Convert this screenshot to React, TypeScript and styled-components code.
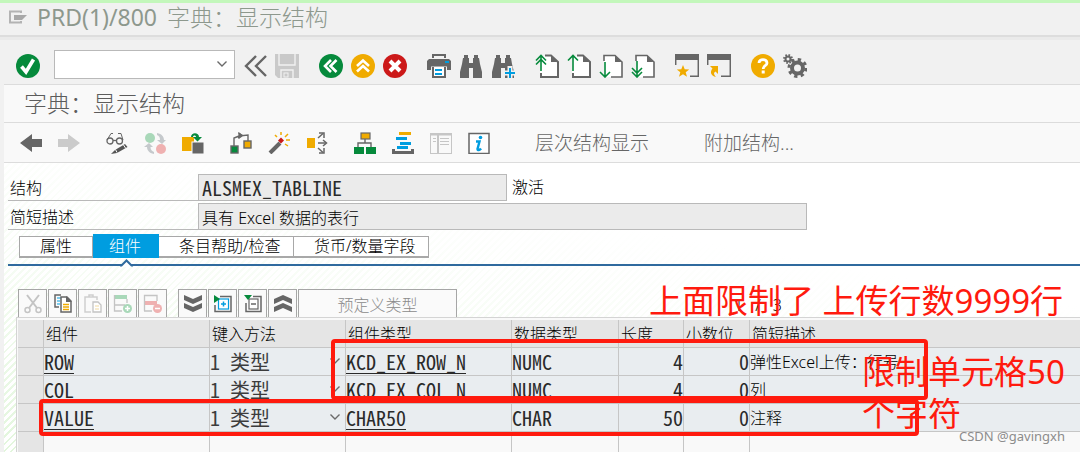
import React from "react";
import styled, { createGlobalStyle } from "styled-components";

const GREY = "#666666";
const GREEN = "#068a3c";
const AMBER = "#f0ab00";
const BLUE = "#009de0";
const RED = "#ff1a0e";

const sans = `"Noto Sans", "Noto Sans CJK SC", sans-serif`;
const mono = `"Noto Sans Mono CJK SC", "Liberation Mono", "Noto Sans CJK SC", monospace`;

const GlobalStyle = createGlobalStyle`
  * { box-sizing: border-box; }
  body { margin: 0; background: #f1f1f1; font-family: ${sans}; font-size: 16px; font-weight: 300; color: #000; overflow-x: hidden; }
  button, input, select { font: inherit; color: inherit; margin: 0; border-radius: 0; }
  svg { display: block; }
`;

const Page = styled.main`
  position: relative;
  width: 100%;
`;

const TitleBar = styled.header`
  display: flex;
  align-items: center;
  gap: 10px;
  height: 37px;
  padding: 0 8px 5px;
  border-top: 3px solid #c3f7bb;
  border-bottom: 2px solid #dddddd;
  color: #8d988d;
  font-size: 23px;
  font-weight: 400;
  line-height: 26px;
`;

const TitleCjk = styled.span`
  font-weight: 300;
`;

const Window = styled.div`
  border-top: 3px solid #eaeaea;
  padding-left: 4px;
`;

const SystemBar = styled.div`
  display: flex;
  align-items: center;
  gap: 20px;
  height: 45px;
  padding: 8px 12px 0;
  border-bottom: 1px solid #dcdcdc;
`;

const CommandArea = styled.div`
  display: flex;
  align-items: center;
  gap: 8px;
`;

const CommandSelect = styled.div`
  position: relative;
  margin: 0 0 4px 6px;
  select {
    display: block;
    appearance: none;
    width: 181px;
    height: 29px;
    background: #fff;
    border: 1px solid #b9b9b9;
  }
  svg {
    position: absolute;
    right: 7px;
    top: 10px;
    pointer-events: none;
  }
`;

const Group = styled.div<{ $gap: number }>`
  display: flex;
  align-items: center;
  gap: ${(p) => p.$gap}px;
`;

const IconButton = styled.button`
  display: block;
  padding: 0;
  border: 0;
  background: none;
`;

const ScreenTitle = styled.h1`
  margin: 0;
  height: 38px;
  padding: 0 20px;
  background: #f9f9f9;
  border-bottom: 1px solid #dcdcdc;
  color: #5c5c5c;
  font-size: 23px;
  font-weight: 300;
  line-height: 36px;
`;

const AppBar = styled.div`
  display: flex;
  align-items: center;
  gap: 26px;
  height: 40px;
  padding: 0 16px;
  background: #f9f9f9;
  border-bottom: 1px solid #dcdcdc;
`;

const TextButton = styled.button`
  margin-left: 19px;
  padding: 0 10px 0 0;
  border: 0;
  background: none;
  color: #666;
  font-size: 19px;
  line-height: 24px;
`;

const Content = styled.section`
  padding: 11px 0 0 4px;
  background:
    linear-gradient(190deg, #fff 30%, rgba(255, 255, 255, 0.7) 60%, rgba(255, 255, 255, 0) 100%),
    repeating-linear-gradient(135deg, #ffffff 0 3px, #e2f6dc 3px 5px);
`;

const Field = styled.div`
  display: flex;
  height: 27px;
  margin-bottom: 2px;
  label {
    width: 190px;
    padding: 2px;
    border-bottom: 1px solid #b9b9b9;
    line-height: 24px;
  }
  span {
    padding-left: 5px;
    line-height: 27px;
  }
`;

const ReadOnlyInput = styled.input<{ $width: number; $mono?: boolean }>`
  width: ${(p) => p.$width}px;
  padding: 0 3px;
  background: #ebebeb;
  border: 1px solid #b9b9b9;
  ${(p) => p.$mono && `font-family: ${mono}; font-size: 20px; line-height: 25px; color: #2a2a2a;`}
`;

const TabStrip = styled.nav`
  display: flex;
  height: 34px;
  padding: 2px 0 0 11px;
  border-bottom: 2px solid #2f6a9e;
`;

const Tab = styled.button<{ $active?: boolean; $width: number }>`
  position: relative;
  width: ${(p) => p.$width}px;
  height: ${(p) => (p.$active ? 24 : 22)}px;
  margin-top: ${(p) => (p.$active ? 0 : 2)}px;
  padding: 0 8px 0 ${(p) => (p.$active ? 16 : 20)}px;
  border: ${(p) => (p.$active ? 0 : "1px solid #a8a8a8")};
  border-bottom-width: ${(p) => (p.$active ? 0 : 2)}px;
  background: ${(p) => (p.$active ? BLUE : "#fff")};
  color: ${(p) => (p.$active ? "#fff" : "#000")};
  line-height: 19px;
  text-align: left;
  white-space: nowrap;
  & + & { border-left-width: 0; }
  svg {
    position: absolute;
    left: 27px;
    top: 25px;
  }
`;

const GridArea = styled.div`
  position: relative;
  padding: 23px 0 0 8px;
`;

const GridBar = styled.div`
  display: flex;
  gap: 1px;
  height: 28px;
  padding-left: 2px;
`;

const GridButton = styled.button<{ $wide?: boolean; $spaced?: boolean }>`
  display: flex;
  align-items: center;
  justify-content: center;
  width: ${(p) => (p.$wide ? 159 : 29)}px;
  height: 28px;
  margin-left: ${(p) => (p.$spaced ? 10 : 0)}px;
  padding: 0;
  border: 1px solid #a6a6a6;
  border-bottom: 0;
  background: #fafafa;
  color: #8a8a8a;
`;

const Counter = styled.span`
  display: flex;
  gap: 12px;
  margin-left: 276px;
  font-size: 16px;
  line-height: 32px;
`;

const Table = styled.table`
  width: 100%;
  table-layout: fixed;
  border-collapse: separate;
  border-spacing: 0;
  border-top: 1px solid #d4d4d4;
  border-left: 1px solid #d4d4d4;
  padding: 2px 0 0 1px;
  background: #f9f9f9;
  line-height: 24px;
  th, td {
    height: 28px;
    padding: 0;
    border-right: 1px solid #c6c6c6;
    border-bottom: 1px solid #c6c6c6;
    white-space: nowrap;
    overflow: hidden;
  }
  th:last-child, td:last-child { border-right: 0; }
  th {
    padding-left: 2px;
    background: #e5e5e5;
    font-weight: 300;
    text-align: left;
  }
  td { background: #e9edf0; }
  td:first-child { background: #e5e5e5; }
`;

const Code = styled.td<{ $right?: boolean }>`
  color: #2a2a2a;
  font-family: ${mono};
  font-size: 20px;
  line-height: 24px;
  text-align: ${(p) => (p.$right ? "right" : "left")};
  a {
    color: inherit;
    text-underline-offset: 3px;
    text-decoration-thickness: 1px;
    text-decoration-skip-ink: none;
  }
`;

const TypeCell = styled.td`
  position: relative;
  select {
    display: block;
    appearance: none;
    width: 100%;
    padding: 0;
    border: 0;
    background: none;
    font-family: ${mono};
    font-size: 20px;
    line-height: 24px;
    color: #3c3c3c;
  }
  svg {
    position: absolute;
    right: 4px;
    top: 9px;
    pointer-events: none;
  }
`;

const LastRow = styled.tr`
  && td { height: 20px; border-bottom: 0; }
  && td:not(:first-child) { background: #f9f9f9; }
`;

/* Red mark-up laid over the grid */
const Mark = styled.div<{ $x: number; $y: number; $w: number; $h: number }>`
  position: absolute;
  left: ${(p) => p.$x}px;
  top: ${(p) => p.$y}px;
  width: ${(p) => p.$w}px;
  height: ${(p) => p.$h}px;
  border: 4px solid ${RED};
  border-radius: 4px;
  pointer-events: none;
`;

const Note = styled.p<{ $x: number; $y: number }>`
  position: absolute;
  left: ${(p) => p.$x}px;
  top: ${(p) => p.$y}px;
  margin: 0;
  color: ${RED};
  font-size: 33px;
  font-weight: 400;
  line-height: 42px;
  white-space: nowrap;
  pointer-events: none;
`;

const Watermark = styled.span`
  position: absolute;
  right: 15px;
  bottom: 6px;
  color: #8c8c8c;
  font-size: 13px;
  font-weight: 400;
  line-height: 20px;
`;

type Art = React.ReactNode;

const Icon = ({ size, children }: { size: number; children: Art }) => (
  <svg width={size} height={size} viewBox={`0 0 ${size} ${size}`} fill="none" aria-hidden="true">
    {children}
  </svg>
);

const Chevron = () => (
  <svg width="12" height="8" viewBox="0 0 12 8" fill="none" aria-hidden="true">
    <path d="M1.5 1.5L6 6L10.500 1.500" stroke="#6a6a6a" strokeWidth="1.400" />
  </svg>
);

const pageShape = (
  <>
    <path d="M5 2H17L23 8V23H5Z" fill="#fff" />
    <path d="M16 1.500L22.500 8H16Z" fill={GREY} />
  </>
);

const binoculars = (
  <path
    d="M5 1H9V4H10V9H14V4H15V1H19V4H20L21 10L23 18V24H14V14H10V24H1V18L3 10L4 4H5Z"
    fill={GREY}
  />
);

const systemIcons: Record<string, Art> = {
  确认: (
    <>
      <circle cx="12" cy="12" r="12" fill={GREEN} />
      <path d="M5.500 12.500L10 18L17.500 5.500" stroke="#fff" strokeWidth="3.600" />
    </>
  ),
  折叠: <path d="M13 2L3 12L13 22M23 2L13 12L23 22" stroke={GREY} strokeWidth="2.400" />,
  保存: (
    <>
      <path d="M0 0H24V24H3L0 21Z" fill="#c9c9c9" />
      <path d="M4 0V11H20V0M6 24V16H18V24" stroke="#f1f1f1" strokeWidth="1.400" />
      <rect x="9" y="19" width="4" height="4" stroke="#f1f1f1" />
    </>
  ),
  返回: (
    <>
      <circle cx="12" cy="12" r="12" fill={GREEN} />
      <path d="M12 6L6 12L12 18M17.500 6L11.500 12L17.500 18" stroke="#fff" strokeWidth="2.600" />
    </>
  ),
  退出: (
    <>
      <circle cx="12" cy="12" r="12" fill={AMBER} />
      <path d="M6 12L12 6.500L18 12M6 17.500L12 12L18 17.500" stroke="#fff" strokeWidth="2.600" />
    </>
  ),
  取消: (
    <>
      <circle cx="12" cy="12" r="12" fill="#cc1919" />
      <path d="M7 7L17 17M17 7L7 17" stroke="#fff" strokeWidth="4" />
    </>
  ),
  打印: (
    <>
      <path d="M6 4V1H18V4" stroke={GREY} strokeWidth="2" />
      <path d="M2 5H22L24 7V16H0V7Z" fill={GREY} />
      <path d="M18 8H22" stroke={BLUE} strokeWidth="2" />
      <path d="M4 12.500H20V17H19V24H5V17H4Z" fill="#f1f1f1" />
      <path d="M6 13V23H18V13" stroke={GREY} strokeWidth="2" fill="#fff" />
      <path d="M8 16H15M8 20H15" stroke={BLUE} strokeWidth="2" />
    </>
  ),
  查找: binoculars,
  继续查找: (
    <>
      {binoculars}
      <path d="M19 12V24M12 19H24" stroke="#f1f1f1" strokeWidth="5" />
      <path d="M19 14V24M14 19H24" stroke={BLUE} strokeWidth="2" />
    </>
  ),
  首页: (
    <>
      {pageShape}
      <path d="M10 1.500H16L23 8V23H6V19" stroke={GREY} strokeWidth="2" />
      <path d="M6 17V2M1 6.500L6 1.500L11 6.500M1 10.500L6 5.500L11 10.500" stroke={GREEN} strokeWidth="1.600" />
    </>
  ),
  上页: (
    <>
      {pageShape}
      <path d="M10 1.500H16L23 8V23H6V19" stroke={GREY} strokeWidth="2" />
      <path d="M6 17V2M1 6.500L6 1.500L11 6.500" stroke={GREEN} strokeWidth="1.600" />
    </>
  ),
  下页: (
    <>
      {pageShape}
      <path d="M5 7V1.500H16L23 8V23H12" stroke={GREY} strokeWidth="1.600" />
      <path d="M6 8V23M1 18L6 23L11 18" stroke={GREEN} strokeWidth="1.600" />
    </>
  ),
  末页: (
    <>
      {pageShape}
      <path d="M5 7V1.500H16L23 8V23H12" stroke={GREY} strokeWidth="1.600" />
      <path d="M6 7V23M1 18L6 23L11 18M1 14L6 19L11 14" stroke={GREEN} strokeWidth="1.600" />
    </>
  ),
  新窗口: (
    <>
      <path d="M0 0H24V6H0Z" fill={GREY} />
      <path d="M.7 5V11M23.300 5V22.300H15" stroke={GREY} strokeWidth="1.500" />
      <path d="M8 11L9.700 15.300L14.200 15.500L10.700 18.300L12 22.800L8 20.200L4 22.800L5.300 18.300L1.800 15.500L6.300 15.300Z" fill={AMBER} />
    </>
  ),
  快捷方式: (
    <>
      <path d="M0 0H24V6H0Z" fill={GREY} />
      <path d="M.7 5V11M23.300 5V22.300H14" stroke={GREY} strokeWidth="1.500" />
      <path d="M3 12H11V20L8.500 17.500C6.500 19 6.500 20 9 23C4 22 2.500 18 5.500 14.500Z" fill={AMBER} />
    </>
  ),
  帮助: (
    <>
      <circle cx="12" cy="12" r="12" fill={AMBER} />
      <path d="M8 9C8 4.500 16 4.500 16 9C16 12 12.200 11.500 12.200 15" stroke="#fff" strokeWidth="2.800" />
      <rect x="10.700" y="16.500" width="3" height="3" fill="#fff" />
    </>
  ),
  设置: (
    <>
      <circle cx="14.500" cy="14" r="5.500" stroke={GREY} strokeWidth="4" />
      <circle cx="14.500" cy="14" r="8.500" stroke={GREY} strokeWidth="3" strokeDasharray="3.300 3.376" />
      <circle cx="5" cy="5" r="2.500" stroke={GREY} strokeWidth="2" />
      <circle cx="5" cy="5" r="4" stroke={GREY} strokeWidth="2" strokeDasharray="1.600 1.542" />
    </>
  ),
};

const appIcons: Record<string, Art> = {
  后退: <path d="M0 11L12 2V7H22V15H12V20Z" fill={GREY} />,
  前进: <path d="M22 11L10 2V7H0V15H10V20Z" fill="#cbcbcb" />,
  "显示/修改": (
    <>
      <path d="M1 8L5 1.500H7M12 1.500H15L17 8" stroke={GREY} />
      <circle cx="4" cy="9" r="3" stroke={GREY} strokeWidth="1.300" />
      <circle cx="13.500" cy="9" r="3" stroke={GREY} strokeWidth="1.300" />
      <path d="M7 8.500H10.500" stroke={GREY} strokeWidth="1.300" />
      <path d="M9 18L19 12L21.500 15L11 21L5 22Z" fill="#555" />
      <path d="M9.500 17.500L11 20.500M17.500 13L19.500 16" stroke="#f9f9f9" />
    </>
  ),
  激活状态: (
    <>
      <circle cx="6" cy="6" r="5" fill="#a9d8b9" />
      <circle cx="17" cy="17" r="5" fill="#efb1b1" />
      <path d="M13 1C18 2 20 5 20 8H22L18 12L13 8H16C16 5 15 4 13 3Z" fill="#c5c9cc" />
      <path d="M10 22C5 21 3 18 3 15H0L5 11L9 15H6.500C6.500 18 8 19 10 20Z" fill="#c5c9cc" />
    </>
  ),
  复制对象: (
    <>
      <rect x="0" y="5" width="12" height="14" fill={AMBER} />
      <rect x="10" y="10" width="12" height="12" fill={GREY} stroke="#f9f9f9" />
      <path d="M9 5C9 0 17 0 17 5H20L15.500 9.500L11 5H14C14 3 11 3 11 5Z" fill={GREEN} />
    </>
  ),
  使用位置: (
    <>
      <path d="M4 14V6L9 4L18 3V9M9 1L12 4L8 6" stroke={GREY} strokeWidth="1.400" />
      <path d="M8 0L13 3L9 7Z" fill={GREY} />
      <rect x="1" y="14" width="7" height="7" fill={GREEN} stroke={GREY} strokeWidth="1.400" />
      <rect x="14" y="9" width="7" height="7" fill={AMBER} stroke={GREY} strokeWidth="1.400" />
    </>
  ),
  检查: (
    <>
      <path d="M2 21L12 11" stroke={GREY} strokeWidth="4" />
      <path d="M13 5.500L16 8.500L13 11.500L10 8.500Z" fill="#cc1919" />
      <path d="M9 5L7 3M13 3V0M17 5L20 2M18 8H22M17 12L20 14" stroke={AMBER} strokeWidth="1.500" />
    </>
  ),
  分发: (
    <>
      <rect x="1" y="6" width="8" height="10" fill={AMBER} />
      <path d="M12 6L17 1.500M12 11H20M12 16L17 20.500" stroke={GREY} strokeWidth="1.500" />
      <path d="M13 1H18V6M17 8L20.500 11L17 14M13 21H18V16" stroke={GREY} strokeWidth="1.500" />
    </>
  ),
  层次: (
    <>
      <path d="M11 7V11M4 15V11H17V15" stroke={GREY} strokeWidth="1.400" />
      <rect x="7" y="1" width="9" height="6" fill={AMBER} stroke={GREY} strokeWidth="1.200" />
      <rect x="0" y="15" width="10" height="7" fill={GREEN} />
      <rect x="12" y="15" width="10" height="7" fill={GREEN} />
    </>
  ),
  对齐: (
    <>
      <path d="M7 1.500H19" stroke={AMBER} strokeWidth="3" />
      <path d="M4 6.500H15M8 11.500H19M5 15.500H16" stroke={BLUE} strokeWidth="3" />
      <path d="M0 17H3V19H19V17H22V22H0Z" fill={GREY} />
    </>
  ),
  表视图: (
    <>
      <rect x=".5" y="1.500" width="21" height="20" stroke="#c6c6c6" />
      <path d="M0 2.500H22M8 3V21" stroke="#c6c6c6" strokeWidth="2" />
      <path d="M3 6.500H6M3 9.500H6M10 6.500H19M10 9.500H19M10 12.500H19" stroke="#c6c6c6" />
    </>
  ),
  信息: (
    <>
      <rect x="1" y="1.500" width="20" height="20" fill="#fff" stroke={GREY} strokeWidth="1.500" />
      <circle cx="12.500" cy="5.500" r="1.800" fill={BLUE} />
      <path d="M8 9.500H11.500L9.500 17C9.500 18.800 12 18 13 16.500" stroke={BLUE} strokeWidth="2.400" />
    </>
  ),
};

const gridIcons: Record<string, Art> = {
  剪切: (
    <>
      <path d="M4 1L14 14M16 1L6 14" stroke="#c4c4c4" strokeWidth="2" />
      <circle cx="4.500" cy="16" r="2.500" stroke="#c4c4c4" strokeWidth="1.500" />
      <circle cx="15.500" cy="16" r="2.500" stroke="#c4c4c4" strokeWidth="1.500" />
    </>
  ),
  复制: (
    <>
      <path d="M6 13H2V1H8" stroke={GREY} strokeWidth="1.500" />
      <path d="M4 4H8M4 7H7M4 10H7" stroke={BLUE} />
      <path d="M8 3H14L18 7V18H8Z" fill="#fff" stroke={GREY} strokeWidth="1.500" />
      <path d="M13 2L19 8H13Z" fill={GREY} />
      <path d="M10 10.500H16M10 13H16M10 15.500H16" stroke={AMBER} strokeWidth="1.500" />
    </>
  ),
  粘贴: (
    <>
      <path d="M8 18H2V3H14V6M6 3V1H10V3" stroke="#cfcfcf" strokeWidth="1.500" />
      <path d="M10 8H15L18 11V18H10Z" fill="#fff" stroke="#c4c4c4" strokeWidth="1.300" />
      <path d="M12 12H16M12 15H16" stroke="#f0d9a0" />
    </>
  ),
  插入行: (
    <>
      <rect x="1" y="1" width="13" height="4" fill="#a9d8b9" />
      <path d="M1.500 1V17H9M1 11H12M14 5V9" stroke="#c4c4c4" strokeWidth="1.300" />
      <circle cx="14.500" cy="14.500" r="4.500" fill="#a9d8b9" />
      <path d="M12 14.500H17M14.500 12V17" stroke="#fff" strokeWidth="1.500" />
    </>
  ),
  删除行: (
    <>
      <rect x="1" y="7" width="13" height="4" fill="#efb1b1" />
      <path d="M1.500 17V1.500H14V7M1 17H9" stroke="#c4c4c4" strokeWidth="1.300" />
      <circle cx="14.500" cy="14.500" r="4.500" fill="#efb1b1" />
      <path d="M12 14.500H17" stroke="#fff" strokeWidth="1.500" />
    </>
  ),
  展开全部: <path d="M1 1L10 5L19 1V6L10 10L1 6ZM1 9L10 13L19 9V14L10 18L1 14Z" fill={GREY} />,
  展开: (
    <>
      <path d="M7 2.500H18V17.500H2V11" stroke={GREY} strokeWidth="1.500" />
      <rect x="5.500" y="5" width="10" height="10" stroke={BLUE} strokeWidth="1.200" fill="#fff" />
      <path d="M8 10H13M10.500 7.500V12.500" stroke={BLUE} strokeWidth="1.500" />
      <path d="M1 1L7 5L1 9Z" fill={GREEN} />
    </>
  ),
  收起: (
    <>
      <path d="M10 2.500H18V17.500H3V9" stroke={GREY} strokeWidth="1.500" />
      <rect x="6" y="5" width="9" height="10" stroke={GREY} strokeWidth="1.200" fill="#fff" />
      <path d="M8 10H13" stroke={GREY} strokeWidth="1.500" />
      <path d="M1 1H9L5 6Z" fill={GREEN} />
    </>
  ),
  收起全部: <path d="M1 10L10 6L19 10V5L10 1L1 5ZM1 18L10 14L19 18V13L10 9L1 13Z" fill={GREY} />,
};

const systemGroups = [
  ["返回", "退出", "取消"],
  ["打印", "查找", "继续查找"],
  ["首页", "上页", "下页", "末页"],
  ["新窗口", "快捷方式"],
  ["帮助", "设置"],
];

const appGroups = [
  ["后退", "前进"],
  ["显示/修改", "激活状态", "复制对象"],
  ["使用位置", "检查", "分发"],
  ["层次", "对齐", "表视图", "信息"],
];

const columns = [26, 166, 136, 166, 107, 65, 66];
const headings = ["组件", "键入方法", "组件类型", "数据类型", "长度", "小数位", "简短描述"];

const rows = [
  { name: "ROW", type: "KCD_EX_ROW_N", data: "NUMC", length: 4, text: "弹性Excel上传：行号" },
  { name: "COL", type: "KCD_EX_COL_N", data: "NUMC", length: 4, text: "列" },
  { name: "VALUE", type: "CHAR50", data: "CHAR", length: 50, text: "注释" },
];

const SystemIcon = ({ name }: { name: string }) => (
  <IconButton type="button" aria-label={name}>
    <Icon size={24}>{systemIcons[name]}</Icon>
  </IconButton>
);

export default function App() {
  return (
    <>
      <GlobalStyle />
      <Page lang="zh-CN">
        <TitleBar>
          <svg width="19" height="14" viewBox="0 0 19 14" fill="none" aria-hidden="true">
            <path d="M13 3V1.500H2V12.500H13V11" stroke="#b3b3b3" strokeWidth="2" />
            <path d="M6 5H19L14 10H6Z" fill="#a8a8a8" />
          </svg>
          <span>PRD(1)/800</span>
          <TitleCjk>字典：显示结构</TitleCjk>
        </TitleBar>

        <Window>
          <SystemBar>
            <CommandArea>
              <SystemIcon name="确认" />
              <CommandSelect>
                <select aria-label="命令" defaultValue="">
                  <option value="" />
                </select>
                <Chevron />
              </CommandSelect>
              <Group $gap={8}>
                <SystemIcon name="折叠" />
                <SystemIcon name="保存" />
              </Group>
            </CommandArea>
            {systemGroups.map((names) => (
              <Group $gap={8} key={names[0]}>
                {names.map((name) => (
                  <SystemIcon name={name} key={name} />
                ))}
              </Group>
            ))}
          </SystemBar>

          <ScreenTitle>字典：显示结构</ScreenTitle>

          <AppBar>
            {appGroups.map((names) => (
              <Group $gap={16} key={names[0]}>
                {names.map((name) => (
                  <IconButton type="button" aria-label={name} key={name}>
                    <Icon size={22}>{appIcons[name]}</Icon>
                  </IconButton>
                ))}
              </Group>
            ))}
            <TextButton type="button">层次结构显示</TextButton>
            <TextButton type="button">附加结构...</TextButton>
          </AppBar>

          <Content>
            <Field>
              <label htmlFor="structure">结构</label>
              <ReadOnlyInput id="structure" readOnly $width={309} $mono value="ALSMEX_TABLINE" />
              <span>激活</span>
            </Field>
            <Field>
              <label htmlFor="description">简短描述</label>
              <ReadOnlyInput id="description" readOnly $width={609} value="具有 Excel 数据的表行" />
            </Field>

            <TabStrip>
              <Tab type="button" $width={74}>属性</Tab>
              <Tab type="button" $width={66} $active>
                组件
                <svg width="13" height="8" viewBox="0 0 13 8" fill="none" aria-hidden="true">
                  <path d="M1 7L6.500 1.500L12 7V8H1Z" fill="#fff" />
                  <path d="M0 6.500H1.500L6.500 1.500L11.500 6.500H13" stroke="#2f6a9e" strokeWidth="2" />
                </svg>
              </Tab>
              <Tab type="button" $width={135}>条目帮助/检查</Tab>
              <Tab type="button" $width={135}>货币/数量字段</Tab>
            </TabStrip>

            <GridArea>
              <GridBar>
                {Object.keys(gridIcons).map((name) => (
                  <GridButton type="button" aria-label={name} key={name} $spaced={name === "展开全部"}>
                    <Icon size={20}>{gridIcons[name]}</Icon>
                  </GridButton>
                ))}
                <GridButton type="button" $wide>预定义类型</GridButton>
                <Counter>
                  <span>1</span>
                  <span>/</span>
                  <span>3</span>
                </Counter>
              </GridBar>

              <Table>
                <colgroup>
                  {columns.map((width, i) => (
                    <col width={width} key={i} />
                  ))}
                  <col />
                </colgroup>
                <thead>
                  <tr>
                    <th aria-label="选择" />
                    {headings.map((heading) => (
                      <th scope="col" key={heading}>{heading}</th>
                    ))}
                  </tr>
                </thead>
                <tbody>
                  {rows.map((row) => (
                    <tr key={row.name}>
                      <td />
                      <Code><a href="#component">{row.name}</a></Code>
                      <TypeCell>
                        <select aria-label={`${row.name} 键入方法`}>
                          <option>1 类型</option>
                        </select>
                        <Chevron />
                      </TypeCell>
                      <Code><a href="#type">{row.type}</a></Code>
                      <Code>{row.data}</Code>
                      <Code $right>{row.length}</Code>
                      <Code $right>0</Code>
                      <td>{row.text}</td>
                    </tr>
                  ))}
                  <LastRow>
                    {[...columns, 0].map((_, i) => (
                      <td key={i} />
                    ))}
                  </LastRow>
                </tbody>
              </Table>

              <Mark $x={323} $y={73} $w={597} $h={61} />
              <Mark $x={31} $y={133} $w={880} $h={37} />
              <Note $x={641} $y={14}>上面限制了 上传行数9999行</Note>
              <Note $x={854} $y={85}>
                限制单元格50
                <br />
                个字符
              </Note>
              <Watermark>CSDN @gavingxh</Watermark>
            </GridArea>
          </Content>
        </Window>
      </Page>
    </>
  );
}
